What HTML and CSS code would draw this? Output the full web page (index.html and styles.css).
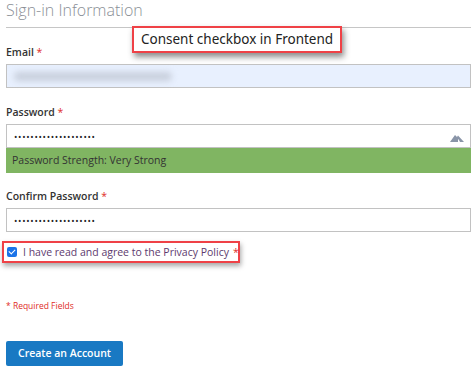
FILE: index.html
```html
<!DOCTYPE html>
<html>
<head>
    <meta charset="utf-8">
    <title>Sign-in Information</title>
    <link rel="stylesheet" href="styles.css">
</head>
<body>
    <div class="wrap">
        <div class="legend">Sign-in Information</div>

        <div class="field field-email">
            <label>Email <span class="req">*</span></label>
            <div class="input autofill"><span class="blur"></span></div>
        </div>

        <div class="field field-pass">
            <label>Password <span class="req">*</span></label>
            <div class="input">
                <span class="dots">&bull;&bull;&bull;&bull;&bull;&bull;&bull;&bull;&bull;&bull;&bull;&bull;&bull;&bull;&bull;&bull;&bull;&bull;&bull;&bull;</span>
                <svg class="eye" width="14" height="8" viewBox="0 0 14 8">
                    <path d="M0 8 L5 1 L7 3 L8 1.5 L14 8 L10 8 L8.5 5 L7 8 Z" fill="#8a95a8"/>
                    <rect x="7" y="5.5" width="1" height="2.5" fill="#8a95a8"/>
                </svg>
            </div>
            <div class="meter">Password Strength: Very Strong</div>
        </div>

        <div class="field field-confirm">
            <label>Confirm Password <span class="req">*</span></label>
            <div class="input">
                <span class="dots">&bull;&bull;&bull;&bull;&bull;&bull;&bull;&bull;&bull;&bull;&bull;&bull;&bull;&bull;&bull;&bull;&bull;&bull;&bull;&bull;</span>
            </div>
        </div>

        <div class="consent">
            <span class="box"></span>
            <span class="consent-text">I have read and agree to the Privacy Policy</span>
            <span class="req">*</span>
        </div>

        <div class="required">* Required Fields</div>

        <a href="javascript:;" class="btn">Create an Account</a>
    </div>

    <!-- annotation callout -->
    <div class="callout">Consent checkbox in Frontend</div>
</body>
</html>
```

FILE: styles.css
```css
*{
    margin: 0;
    padding: 0;
    box-sizing: border-box;
}
body{
    margin: 0;
    background: #fff;
    font-family: "Open Sans", "Noto Sans", sans-serif;
    color: #333;
}
.wrap{
    padding: 0 1px 0 6px;
    width: 472px;
}
.legend{
    font-size: 16px;
    font-weight: 300;
    color: #8a8f96;
    line-height: 20px;
    height: 28px;
    border-bottom: 1px solid #c6c6c6;
    white-space: nowrap;
}
.field label{
    display: block;
    font-size: 10.5px;
    font-weight: 600;
    line-height: 16px;
    color: #333;
    white-space: nowrap;
}
.field-email label{ margin-top: 16px; }
.field-pass label{ margin-top: 16px; }
.field-confirm label{ margin-top: 15px; }
.req{
    color: #e02b27;
    font-weight: 400;
}
.input{
    position: relative;
    margin-top: 4px;
    height: 24px;
    border: 1px solid #c2c2c2;
    background: #fff;
    display: flex;
    align-items: center;
    padding-left: 7px;
}
.autofill{
    background: #e8f0fe;
}
.blur{
    display: block;
    width: 158px;
    height: 9px;
    border-radius: 5px;
    background: #c8cfdc;
    filter: blur(3px);
}
.dots{
    font-size: 9px;
    letter-spacing: 0.7px;
    color: #222;
    line-height: 1;
    white-space: nowrap;
}
.eye{
    position: absolute;
    right: 6px;
    top: 9px;
}
.meter{
    height: 25px;
    line-height: 25px;
    background: #80b562;
    font-size: 10.5px;
    padding-left: 6px;
    color: #333;
    white-space: nowrap;
}
.consent{
    display: flex;
    align-items: center;
    margin-top: 9px;
    margin-left: -4px;
    width: 238px;
    height: 22px;
    border: 2px solid #ef4146;
    box-shadow: 1px 3px 5px rgba(0,0,0,0.35);
    padding-left: 3px;
    font-size: 10.5px;
    white-space: nowrap;
}
.box{
    position: relative;
    flex: none;
    width: 10px;
    height: 10px;
    border-radius: 2px;
    background: #1a73e8;
    margin-right: 6px;
}
.box:after{
    content: "";
    position: absolute;
    left: 3px;
    top: 1px;
    width: 3px;
    height: 5px;
    border: solid #fff;
    border-width: 0 1.5px 1.5px 0;
    transform: rotate(45deg);
}
.consent-text{
    color: #5d3a6e;
}
.consent .req{
    margin-left: 4px;
}
.required{
    margin-top: 36px;
    font-size: 8.5px;
    color: #e02b27;
    line-height: 14px;
}
.btn{
    display: inline-block;
    margin-top: 28px;
    width: 117px;
    height: 25px;
    line-height: 25px;
    text-align: center;
    background: #1979c3;
    border-radius: 2px;
    color: #fff;
    font-size: 10.5px;
    font-weight: 600;
    text-decoration: none;
    white-space: nowrap;
}
.callout{
    position: absolute;
    left: 132px;
    top: 26px;
    width: 210px;
    height: 27px;
    border: 2px solid #ef4146;
    background: #fff;
    box-shadow: 2px 4px 6px rgba(0,0,0,0.45);
    font-family: "Noto Sans", "Open Sans", sans-serif;
    font-size: 13.5px;
    line-height: 23px;
    padding-left: 7px;
    color: #222;
    white-space: nowrap;
}
```
